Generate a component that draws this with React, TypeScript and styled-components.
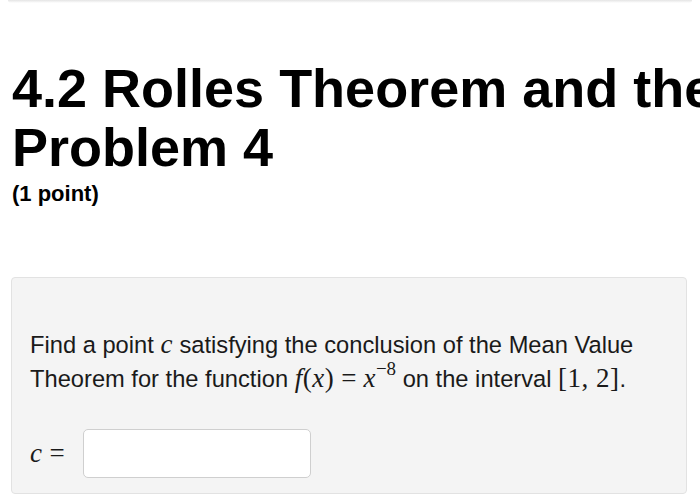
import React from "react";
import styled, { createGlobalStyle } from "styled-components";

const Global = createGlobalStyle`
  html, body { margin: 0; padding: 0; background: #ffffff; }
  body { font-family: "Liberation Sans", Arial, sans-serif; color: #111; overflow: hidden; }
`;

const Page = styled.div`
  width: 700px;
  height: 503px;
  overflow: hidden;
  display: flex;
  flex-direction: column;
`;

const TopEdge = styled.div`
  height: 3px;
  margin: 0 8px;
  background: linear-gradient(#e4e4e4, #ffffff);
  border-radius: 0 0 4px 4px;
`;

const Title = styled.h1`
  margin: 56px 0 0 0;
  padding-left: 12px;
  font-size: 54px;
  line-height: 59px;
  font-weight: 700;
  color: #000;
  white-space: nowrap;
`;

const TitleLine = styled.span`
  display: block;
`;

const Points = styled.div`
  margin: 3px 0 0 12px;
  font-size: 22px;
  line-height: 28px;
  font-weight: 700;
  color: #000;
`;

const ProblemBox = styled.div`
  margin: 69px 13px 0 11px;
  height: 217px;
  box-sizing: border-box;
  background: #f4f4f4;
  border: 1px solid #e2e2e2;
  border-radius: 4px;
  padding: 50px 18px 0 18px;
  display: flex;
  flex-direction: column;
`;

const Statement = styled.p`
  margin: 0;
  font-size: 23.7px;
  line-height: 34px;
  color: #1a1a1a;
  white-space: nowrap;
`;

const M = styled.span<{ $italic?: boolean }>`
  font-family: "Liberation Serif", "DejaVu Serif", serif;
  font-style: ${(p) => (p.$italic ? "italic" : "normal")};
  font-size: 27px;
  line-height: 1;
  letter-spacing: 0.5px;
`;

const Rel = styled.span`
  font-family: "Liberation Serif", "DejaVu Serif", serif;
  font-size: 27px;
  line-height: 1;
  margin: 0 7px;
`;

const Sup = styled.sup`
  font-family: "Liberation Serif", "DejaVu Serif", serif;
  font-size: 19px;
  line-height: 1;
  position: relative;
  top: -3px;
`;

const AnswerRow = styled.div`
  margin-top: 33px;
  display: flex;
  align-items: center;
  gap: 11px;
`;

const AnswerLabel = styled.span`
  font-family: "Liberation Serif", "DejaVu Serif", serif;
  font-size: 27px;
  color: #1a1a1a;
  display: flex;
  align-items: baseline;
`;

const AnswerInput = styled.input`
  width: 228px;
  height: 49px;
  box-sizing: border-box;
  border: 1px solid #cfcfcf;
  border-radius: 5px;
  background: #fff;
  font-size: 20px;
  padding: 0 10px;
  outline: none;
`;

export default function App() {
  return (
    <>
      <Global />
      <Page>
        <TopEdge />
        <Title>
          <TitleLine>4.2 Rolles Theorem and the Mean Value Theorem:</TitleLine>
          <TitleLine>Problem 4</TitleLine>
        </Title>
        <Points>(1 point)</Points>
        <ProblemBox>
          <Statement>
            Find a point <M $italic>c</M> satisfying the conclusion of the Mean Value
            <br />
            Theorem for the function <M $italic>f</M>
            <M>(</M>
            <M $italic>x</M>
            <M>)</M>
            <Rel>=</Rel>
            <M $italic>x</M>
            <Sup>−8</Sup> on the interval <M>[1, 2]</M>.
          </Statement>
          <AnswerRow>
            <AnswerLabel>
              <M $italic>c</M>
              <Rel>=</Rel>
            </AnswerLabel>
            <AnswerInput type="text" aria-label="c" />
          </AnswerRow>
        </ProblemBox>
      </Page>
    </>
  );
}
